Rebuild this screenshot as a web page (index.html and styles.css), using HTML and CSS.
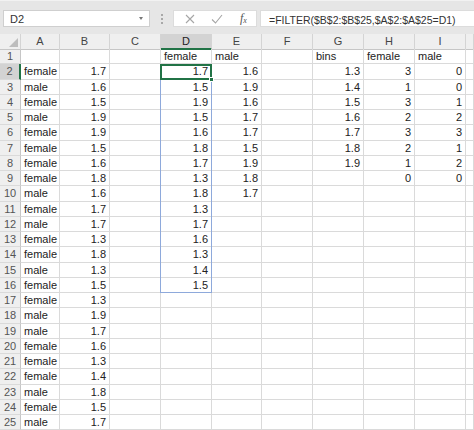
FILE: index.html
```html
<!DOCTYPE html>
<html lang="en">
<head>
    <meta charset="UTF-8">
    <title>FILTER spill</title>
    <link rel="stylesheet" href="styles.css">
</head>
<body>
    <div class="formula-bar">
        <div class="name-box">
            <span class="cell-ref">D2</span>
            <span class="drop-arrow"></span>
        </div>
        <div class="grip"><i></i><i></i><i></i></div>
        <div class="fx-buttons">
            <svg class="btn-icon" width="12" height="12" viewBox="0 0 12 12">
                <path d="M2 2 L10 10 M10 2 L2 10" stroke="#a6a6a6" stroke-width="1.1" fill="none"/>
            </svg>
            <svg class="btn-icon" width="14" height="12" viewBox="0 0 14 12">
                <path d="M2 6.5 L5.5 10 L12 2" stroke="#a6a6a6" stroke-width="1.1" fill="none"/>
            </svg>
            <span class="fx">f<sub>x</sub></span>
        </div>
        <div class="formula-input">=FILTER($B$2:$B$25,$A$2:$A$25=D1)</div>
    </div>

    <div class="sheet" id="sheet">
        <div class="row head-row" id="headRow"></div>
        <div class="spill-range"></div>
        <div class="active-cell"><span class="fill-handle"></span></div>
    </div>

    <script>
        const cols = ['A', 'B', 'C', 'D', 'E', 'F', 'G', 'H', 'I', ''];

        // values per column, row 1 first
        const data = {
            A: ['', 'female', 'male', 'female', 'male', 'female', 'female', 'female', 'female', 'male', 'female',
                'male', 'female', 'female', 'male', 'female', 'female', 'male', 'male', 'female', 'female',
                'female', 'male', 'female', 'male'],
            B: ['', 1.7, 1.6, 1.5, 1.9, 1.9, 1.5, 1.6, 1.8, 1.6, 1.7, 1.7, 1.3, 1.8, 1.3, 1.5, 1.3,
                1.9, 1.7, 1.6, 1.3, 1.4, 1.8, 1.5, 1.7],
            D: ['female', 1.7, 1.5, 1.9, 1.5, 1.6, 1.8, 1.7, 1.3, 1.8, 1.3, 1.7, 1.6, 1.3, 1.4, 1.5],
            E: ['male', 1.6, 1.9, 1.6, 1.7, 1.7, 1.5, 1.9, 1.8, 1.7],
            G: ['bins', 1.3, 1.4, 1.5, 1.6, 1.7, 1.8, 1.9],
            H: ['female', 3, 1, 3, 2, 3, 2, 1, 0],
            I: ['male', 0, 0, 1, 2, 3, 1, 2, 0]
        };

        const sheet = document.getElementById('sheet');
        const headRow = document.getElementById('headRow');

        const corner = document.createElement('div');
        corner.className = 'corner';
        headRow.appendChild(corner);
        cols.forEach(c => {
            const h = document.createElement('div');
            h.className = 'col-head' + (c === 'D' ? ' selected' : '');
            h.textContent = c;
            headRow.appendChild(h);
        });

        for (let r = 1; r <= 25; r++) {
            const row = document.createElement('div');
            row.className = 'row';

            const rh = document.createElement('div');
            rh.className = 'row-head' + (r === 2 ? ' selected' : '');
            rh.textContent = r;
            row.appendChild(rh);

            cols.forEach(c => {
                const cell = document.createElement('div');
                cell.className = 'cell';
                const v = data[c] ? data[c][r - 1] : undefined;
                if (v !== undefined && v !== '') {
                    cell.textContent = typeof v === 'number' ? (Number.isInteger(v) ? v : v.toFixed(1)) : v;
                    if (typeof v === 'number') cell.classList.add('num');
                }
                row.appendChild(cell);
            });
            sheet.appendChild(row);
        }
    </script>
</body>
</html>
```

FILE: styles.css
```css
* {
    margin: 0;
    padding: 0;
    box-sizing: border-box;
}

body {
    font-family: 'Liberation Sans', Arial, sans-serif;
    background: #e6e6e6;
    color: #222;
    overflow: hidden;
}

/* formula bar */
.formula-bar {
    display: flex;
    align-items: stretch;
    height: 27px;
    padding: 9px 0 0 3px;
    border-top: 1px solid #f2f2f2;
}

.name-box {
    width: 147px;
    background: #fff;
    border: 1px solid #cfcfcf;
    display: flex;
    align-items: center;
    justify-content: space-between;
    padding: 0 6px 0 6px;
}

.cell-ref {
    font-size: 11px;
    color: #333;
}

.drop-arrow {
    width: 0;
    height: 0;
    border-left: 2.5px solid transparent;
    border-right: 2.5px solid transparent;
    border-top: 3px solid #777;
}

.grip {
    width: 23px;
    display: flex;
    flex-direction: column;
    align-items: center;
    justify-content: center;
    gap: 2px;
}

.grip i {
    width: 2px;
    height: 2px;
    background: #a8a8a8;
}

.fx-buttons {
    width: 84px;
    background: #fff;
    border: 1px solid #dcdcdc;
    display: flex;
    align-items: center;
    padding-left: 10px;
    gap: 14px;
}

.fx {
    font-family: 'Liberation Serif', serif;
    font-style: italic;
    font-size: 12px;
    color: #555;
    margin-left: 2px;
}

.fx sub {
    font-size: 8px;
    vertical-align: -1px;
}

.formula-input {
    flex: 1;
    margin-left: 3px;
    background: #fff;
    border: 1px solid #dcdcdc;
    border-right: none;
    font-size: 10.5px;
    color: #333;
    padding: 3px 0 0 8px;
    white-space: nowrap;
}

/* sheet */
.sheet {
    position: relative;
    margin-top: 7px;
    background: #fff;
}

.row {
    display: grid;
    grid-template-columns: 21px 39px 50px 51px 51px 50px 51px 51px 51px 51px 1fr;
    height: 15.25px;
    font-size: 11px;
    line-height: 14px;
}

.head-row {
    height: 15px;
    background: #efefef;
}

.corner {
    position: relative;
    border-right: 1px solid #d4d4d4;
    border-bottom: 1px solid #c6c6c6;
    background: #efefef;
}

.corner::after {
    content: '';
    position: absolute;
    right: 2px;
    bottom: 2px;
    border-left: 9px solid transparent;
    border-bottom: 9px solid #bdbdbd;
}

.col-head {
    text-align: center;
    color: #444;
    font-size: 11px;
    border-right: 1px solid #d4d4d4;
    border-bottom: 1px solid #c6c6c6;
}

.col-head.selected {
    background: #d3d3d3;
    border-bottom: 2px solid #217346;
    color: #222;
}

.row-head {
    text-align: center;
    color: #555;
    background: #efefef;
    border-right: 1px solid #c6c6c6;
    border-bottom: 1px solid #dadada;
}

.row-head.selected {
    background: #d3d3d3;
    border-right: 2px solid #217346;
}

.cell {
    border-right: 1px solid #dadada;
    border-bottom: 1px solid #dadada;
    padding: 0 3px;
    white-space: nowrap;
    overflow: hidden;
}

.cell.num {
    text-align: right;
}

/* selection overlays */
.spill-range {
    position: absolute;
    left: 160px;
    top: 29.5px;
    width: 52px;
    height: 229.5px;
    border: 1px solid #8ea9db;
}

.active-cell {
    position: absolute;
    left: 160px;
    top: 29.5px;
    width: 52px;
    height: 16.5px;
    border: 2px solid #217346;
}

.fill-handle {
    position: absolute;
    right: -4px;
    bottom: -4px;
    width: 5px;
    height: 5px;
    background: #217346;
    border: 1px solid #fff;
}
```
